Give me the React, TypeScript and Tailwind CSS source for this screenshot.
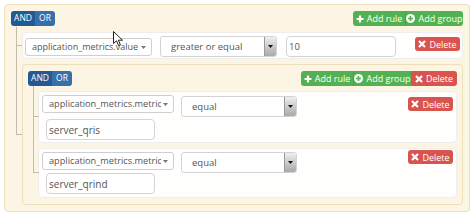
import React from "react";

const font = { fontFamily: '"Open Sans", "DejaVu Sans", sans-serif' };

function PlusIcon() {
  return (
    <svg width="8" height="8" viewBox="0 0 8 8" className="shrink-0">
      <path d="M4 0.5V7.5M0.5 4H7.5" stroke="white" strokeWidth="2.2" />
    </svg>
  );
}

function PlusSignIcon() {
  return (
    <svg width="9" height="9" viewBox="0 0 9 9" className="shrink-0">
      <circle cx="4.5" cy="4.5" r="4.5" fill="white" />
      <path d="M4.5 2V7M2 4.5H7" stroke="#52b152" strokeWidth="1.6" />
    </svg>
  );
}

function XIcon() {
  return (
    <svg width="8" height="8" viewBox="0 0 8 8" className="shrink-0">
      <path d="M1 1L7 7M7 1L1 7" stroke="white" strokeWidth="2.2" />
    </svg>
  );
}

function AndOr() {
  return (
    <div className="flex h-[15px] rounded-[3px] overflow-hidden text-white text-[8.5px] leading-none">
      <div className="w-[24px] flex items-center justify-center bg-[#245a93]">AND</div>
      <div className="w-[20px] flex items-center justify-center bg-[#3670ab]">OR</div>
    </div>
  );
}

function GroupButtons({ withDelete }: { withDelete?: boolean }) {
  return (
    <div className="flex h-[15px] rounded-[3px] overflow-hidden text-white text-[9px] leading-none">
      <div className="w-[53px] flex items-center justify-center gap-[3px] bg-[#52b152] border-r border-[#46a046]">
        <PlusIcon />
        <span>Add rule</span>
      </div>
      <div className="w-[57px] flex items-center justify-center gap-[3px] bg-[#52b152]">
        <PlusSignIcon />
        <span>Add group</span>
      </div>
      {withDelete && (
        <div className="w-[46px] flex items-center justify-center gap-[3px] bg-[#d9534f]">
          <XIcon />
          <span>Delete</span>
        </div>
      )}
    </div>
  );
}

function DeleteBtn({ mt }: { mt: string }) {
  return (
    <div
      className={`ml-auto ${mt} w-[45px] h-[14px] rounded-[3px] bg-[#d9534f] text-white text-[9px] leading-none flex items-center justify-center gap-[3px]`}
    >
      <XIcon />
      <span>Delete</span>
    </div>
  );
}

function FieldSelect({ text, w, mt, ml, size }: { text: string; w: string; mt: string; ml: string; size: string }) {
  return (
    <div
      className={`${w} ${mt} ${ml} ${size} h-[18px] shrink-0 bg-white border border-[#cfcfcf] rounded-[3px] flex items-center pl-[6px] pr-[5px] text-[#555] leading-[14px]`}
    >
      <span className="overflow-hidden whitespace-nowrap flex-1 h-[14px]">{text}</span>
      <svg width="5" height="3" viewBox="0 0 5 3" className="ml-[2px] shrink-0">
        <path d="M0 0H5L2.5 3Z" fill="#777" />
      </svg>
    </div>
  );
}

function OpSelect({ text, w, mt, ml }: { text: string; w: string; mt: string; ml: string }) {
  return (
    <div
      className={`${w} ${mt} ${ml} h-[21px] shrink-0 bg-white border border-[#d4d4d4] rounded-[3px] flex items-stretch text-[#555] text-[9.5px] leading-none overflow-hidden`}
    >
      <span className="flex-1 flex items-center pl-[10px] whitespace-nowrap">{text}</span>
      <div className="w-[12px] bg-gradient-to-b from-[#efefef] to-[#a9a9a9] border-l border-[#9a9a9a] flex items-center justify-center">
        <svg width="5" height="3" viewBox="0 0 5 3">
          <path d="M0 0H5L2.5 3Z" fill="#111" />
        </svg>
      </div>
    </div>
  );
}

function TextInput({ text, w, mt, ml, size }: { text: string; w: string; mt: string; ml: string; size: string }) {
  return (
    <div
      className={`${w} ${mt} ${ml} ${size} h-[21px] shrink-0 bg-white border border-[#d4d4d4] rounded-[4px] flex items-center pl-[2px] text-[#555] leading-[14px]`}
    >
      {text}
    </div>
  );
}

function Connector({ left, last }: { left: string; last?: boolean }) {
  return (
    <>
      <span
        className={`absolute ${left} top-[-6px] w-[6px] h-[calc(50%+6px)] border-l border-b border-[#c4bcaa] pointer-events-none`}
      />
      {!last && (
        <span
          className={`absolute ${left} top-[50%] w-[6px] h-[calc(50%+6px)] border-l border-[#c4bcaa] pointer-events-none`}
        />
      )}
    </>
  );
}

export default function App() {
  return (
    <div className="relative w-[474px] h-[217px] bg-white overflow-hidden" style={font}>
      <div className="ml-[4px] mt-[4px] w-[466px] border border-[#ecdfb9] bg-[#fcf5e3] rounded-[4px] p-[6px]">
        <div className="flex justify-between h-[15px]">
          <AndOr />
          <GroupButtons />
        </div>
        <div className="mt-[6px] pl-[11px] flex flex-col gap-[5px]">
          {/* outer rule */}
          <div className="relative h-[27px] border border-[#eeeeee] bg-white/90 rounded-[4px] flex items-start">
            <Connector left="left-[-7px]" />
            <FieldSelect text="application_metrics.value" w="w-[127px]" mt="mt-[5px]" ml="ml-[2px]" size="text-[9px]" />
            <OpSelect text="greater or equal" w="w-[117px]" mt="mt-[3px]" ml="ml-[8px]" />
            <TextInput text="10" w="w-[110px]" mt="mt-[3px]" ml="ml-[9px]" size="text-[9.5px]" />
            <div className="mr-[2px] ml-auto flex">
              <DeleteBtn mt="mt-[4px]" />
            </div>
          </div>
          {/* inner group */}
          <div className="relative border border-[#ecdfb9] bg-[#fcf5e3] rounded-[4px] pt-[6px] px-[5px] pb-[6px]">
            <Connector left="left-[-7px]" last />
            <div className="flex justify-between h-[15px]">
              <AndOr />
              <GroupButtons withDelete />
            </div>
            <div className="mt-[5px] pl-[10px] flex flex-col gap-[5px]">
              <div className="relative border border-[#eeeeee] bg-white/90 rounded-[4px] pb-[2px]">
                <Connector left="left-[-6px]" />
                <div className="flex items-start h-[25px]">
                  <FieldSelect text="application_metrics.metric" w="w-[132px]" mt="mt-[3px]" ml="ml-[3px]" size="text-[9.2px]" />
                  <OpSelect text="equal" w="w-[116px]" mt="mt-[4px]" ml="ml-[7px]" />
                  <div className="mr-[3px] ml-auto flex">
                    <DeleteBtn mt="mt-[5px]" />
                  </div>
                </div>
                <TextInput text="server_qris" w="w-[109px]" mt="mt-[2px]" ml="ml-[7px]" size="text-[10px]" />
              </div>
              <div className="relative border border-[#eeeeee] bg-white/90 rounded-[4px] pb-[3px]">
                <Connector left="left-[-6px]" last />
                <div className="flex items-start h-[24px]">
                  <FieldSelect text="application_metrics.metric" w="w-[132px]" mt="mt-[3px]" ml="ml-[3px]" size="text-[9.2px]" />
                  <OpSelect text="equal" w="w-[116px]" mt="mt-[3px]" ml="ml-[7px]" />
                  <div className="mr-[3px] ml-auto flex">
                    <DeleteBtn mt="mt-[1px]" />
                  </div>
                </div>
                <TextInput text="server_qrind" w="w-[109px]" mt="mt-[0px]" ml="ml-[7px]" size="text-[10px]" />
              </div>
            </div>
          </div>
        </div>
      </div>
      {/* mouse cursor */}
      <svg className="absolute left-[113px] top-[31px]" width="11" height="16" viewBox="0 0 11 16">
        <path d="M0.5 0.5V12.5L3.5 9.8L5.6 14.6L7.4 13.8L5.4 9.2H9.5Z" fill="white" stroke="#222" strokeWidth="1" strokeLinejoin="round" />
      </svg>
    </div>
  );
}
